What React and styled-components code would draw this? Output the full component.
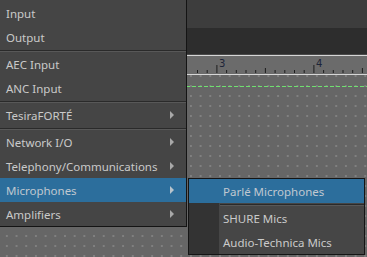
import React from "react";
import styled, { createGlobalStyle } from "styled-components";

const GlobalStyle = createGlobalStyle`
  html, body {
    margin: 0;
    padding: 0;
    background: #3c3c3c;
  }
  body {
    font-family: "Noto Sans", "Open Sans", sans-serif;
  }
`;

const Page = styled.div`
  position: relative;
  width: 367px;
  height: 257px;
  overflow: hidden;
  display: flex;
  flex-direction: column;
`;

const TopBar = styled.div`
  height: 28px;
  background: #3d3d3d;
`;

const DarkBand = styled.div`
  height: 26px;
  background: #2d2d2d;
  border-bottom: 1px solid #4a4a4a;
`;

const RulerBand = styled.div`
  height: 18px;
  background: #6b6b6b;
  border-top: 1px solid #d6d6d6;
  border-bottom: 1px solid #d6d6d6;
`;

const Canvas = styled.div`
  flex: 1;
  background-color: #666666;
  background-image: radial-gradient(circle, #8c8c8c 0.6px, transparent 0.9px);
  background-size: 9.7px 10px;
  background-position: 2px 6px;
`;

const GuideLine = styled.div`
  margin-top: 11px;
  height: 1px;
  background: repeating-linear-gradient(
    90deg,
    #6fe06f 0 4px,
    transparent 4px 6px
  );
`;

const Menu = styled.div`
  position: absolute;
  left: 0;
  top: 0;
  width: 186px;
  padding-top: 1px;
  background: #454545;
  border-right: 1px solid #141414;
  border-bottom: 1px solid #141414;
`;

const SubMenu = styled.div`
  position: absolute;
  left: 188px;
  top: 178px;
  width: 175px;
  background: linear-gradient(90deg, #333333 0 30px, #464646 30px);
  border: 1px solid #141414;
`;

const Item = styled.div`
  height: 24px;
  display: flex;
  align-items: center;
  justify-content: space-between;
  padding: 0 12px 0 ${(p) => p.$indent}px;
  font-size: 11.5px;
  color: ${(p) => (p.$active ? "#c0c8d0" : "#cacaca")};
  background: ${(p) => (p.$active ? "#2c6e9c" : "transparent")};
  white-space: nowrap;
`;

const Arrow = styled.span`
  width: 0;
  height: 0;
  border-top: 4px solid transparent;
  border-bottom: 4px solid transparent;
  border-left: 4px solid ${(p) => (p.$active ? "#b8c4cc" : "#a8a8a8")};
`;

const Separator = styled.div`
  margin: 1px 0 0 ${(p) => p.$indent || 0}px;
  height: 1px;
  background: #2a2a2a;
  border-bottom: 1px solid #585858;
`;

function Ruler() {
  const ticks = [];
  for (let i = 0; i < 40; i++) {
    const x = 197.5 + i * 9.7;
    if (x > 367) break;
    const k = i - 2;
    const major = k % 10 === 0;
    const mid = !major && k % 5 === 0;
    const h = major ? 8 : mid ? 5 : 3;
    ticks.push(
      <line key={i} x1={x} x2={x} y1={17 - h} y2={17} stroke="#1e1e1e" strokeWidth="1" />
    );
  }
  return (
    <svg width="367" height="18" style={{ display: "block" }}>
      {ticks}
      <text x="219" y="11" fontSize="10" fill="#1c2438" fontFamily="DejaVu Sans, sans-serif">3</text>
      <text x="316" y="11" fontSize="10" fill="#1c2438" fontFamily="DejaVu Sans, sans-serif">4</text>
    </svg>
  );
}

const mainItems = [
  { label: "Input" },
  { label: "Output" },
  { sep: true },
  { label: "AEC Input" },
  { label: "ANC Input" },
  { sep: true },
  { label: "TesiraFORTÉ", sub: true },
  { sep: true },
  { label: "Network I/O", sub: true },
  { label: "Telephony/Communications", sub: true },
  { label: "Microphones", sub: true, active: true },
  { label: "Amplifiers", sub: true },
];

export default function App() {
  return (
    <>
      <GlobalStyle />
      <Page>
        <TopBar />
        <DarkBand />
        <RulerBand>
          <Ruler />
        </RulerBand>
        <Canvas>
          <GuideLine />
        </Canvas>

        <Menu>
          {mainItems.map((it, i) =>
            it.sep ? (
              <Separator key={i} />
            ) : (
              <Item key={i} $indent={6} $active={it.active}>
                <span>{it.label}</span>
                {it.sub && <Arrow $active={it.active} />}
              </Item>
            )
          )}
        </Menu>

        <SubMenu>
          <Item $indent={34} $active>
            <span>Parlé Microphones</span>
          </Item>
          <Separator $indent={31} />
          <Item $indent={34}>
            <span>SHURE Mics</span>
          </Item>
          <Item $indent={34}>
            <span>Audio-Technica Mics</span>
          </Item>
        </SubMenu>
      </Page>
    </>
  );
}
